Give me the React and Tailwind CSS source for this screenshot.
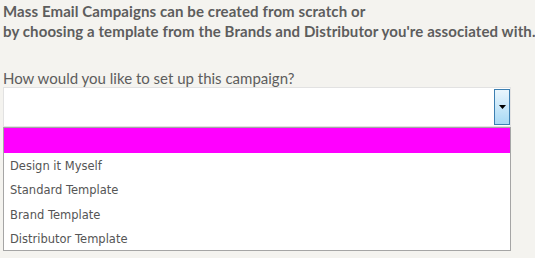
const options = ["Design it Myself", "Standard Template", "Brand Template", "Distributor Template"]

export default function App() {
  return (
    <div className="w-[535px] h-[258px] overflow-hidden bg-[#f4f3ef] text-[#5d5d5d] font-['Lato',sans-serif]">
      <div className="pl-[3px] pt-[1px]">
        <p className="text-[15px] leading-[20px] font-bold whitespace-nowrap tracking-[0.1px]">
          Mass Email Campaigns can be created from scratch or
          <br />
          by choosing a template from the Brands and Distributor you're associated with.
        </p>
        <p className="mt-[28px] text-[15px] leading-[18px] whitespace-nowrap">
          How would you like to set up this campaign?
        </p>
      </div>
      <div className="ml-[3px] w-[508px]">
        <div className="h-[40px] bg-white border border-[#e2e2e2] flex justify-end items-stretch p-[1px] pr-0">
          <div className="w-[16px] border border-[#3c7fb1] bg-gradient-to-b from-[#eaf6fd] to-[#a7d9f5] flex items-center justify-center">
            <svg width="7" height="4" viewBox="0 0 7 4"><path d="M0 0h7L3.5 4z" fill="#000" /></svg>
          </div>
        </div>
        <div className="border border-[#a5a5a5] bg-white font-['DejaVu_Sans',sans-serif] text-[11.5px] text-[#555]">
          <div className="h-[25px] bg-[#ff00ff]" />
          {options.map((o) => (
            <div key={o} className="h-[24.25px] flex items-center pt-[3px] px-[6px]">
              {o}
            </div>
          ))}
        </div>
      </div>
    </div>
  )
}
